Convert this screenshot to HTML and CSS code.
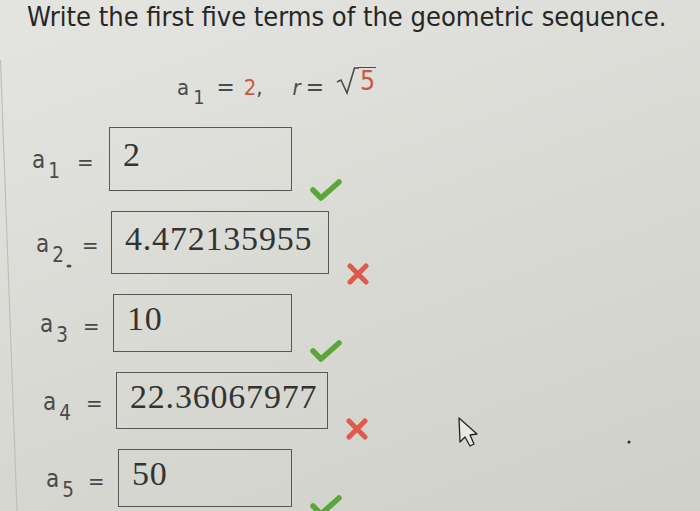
FILE: index.html
```html
<!DOCTYPE html>
<html>
<head>
<meta charset="utf-8">
<link rel="stylesheet" href="styles.css">
</head>
<body>
<div class="page">
  <h1 class="title">Write the first five terms of the geometric sequence.</h1>
  <div class="given">
    <span class="gv">a<sub>1</sub></span>
    <span class="geq">=</span>
    <span class="gval">2</span><span class="comma">,</span>
    <span class="gr">r</span>
    <span class="geq2">=</span>
    <span class="sqrt"><svg class="rad" width="23" height="28" viewBox="0 0 23 28"><path d="M1 15 L5 13 L11 26 L18.5 1 L23 1" fill="none" stroke="#4a4a4a" stroke-width="1.6"/></svg><span class="radicand">5</span></span>
  </div>
  <div class="rows">
    <div class="row r1">
      <span class="lbl">a<sub>1</sub></span><span class="eq">=</span>
      <div class="box"><span class="ans">2</span>
        <svg class="mark check" width="32" height="22" viewBox="0 0 32 22"><path d="M3 11 L11 19 L29 3" fill="none" stroke="#5ca53a" stroke-width="5.5" stroke-linecap="round" stroke-linejoin="round"/></svg>
      </div>
    </div>
    <div class="row r2">
      <span class="lbl">a<sub>2</sub></span><span class="eq">=</span>
      <div class="box"><span class="ans">4.472135955</span>
        <svg class="mark cross" width="22" height="22" viewBox="0 0 22 22"><path d="M3 3 L19 19 M19 3 L3 19" fill="none" stroke="#e05a4c" stroke-width="5" stroke-linecap="round"/></svg>
      </div>
    </div>
    <div class="row r3">
      <span class="lbl">a<sub>3</sub></span><span class="eq">=</span>
      <div class="box"><span class="ans">10</span>
        <svg class="mark check" width="32" height="22" viewBox="0 0 32 22"><path d="M3 11 L11 19 L29 3" fill="none" stroke="#5ca53a" stroke-width="5.5" stroke-linecap="round" stroke-linejoin="round"/></svg>
      </div>
    </div>
    <div class="row r4">
      <span class="lbl">a<sub>4</sub></span><span class="eq">=</span>
      <div class="box"><span class="ans">22.36067977</span>
        <svg class="mark cross" width="22" height="22" viewBox="0 0 22 22"><path d="M3 3 L19 19 M19 3 L3 19" fill="none" stroke="#e05a4c" stroke-width="5" stroke-linecap="round"/></svg>
      </div>
    </div>
    <div class="row r5">
      <span class="lbl">a<sub>5</sub></span><span class="eq">=</span>
      <div class="box"><span class="ans">50</span>
        <svg class="mark check" width="32" height="22" viewBox="0 0 32 22"><path d="M3 11 L11 19 L29 3" fill="none" stroke="#5ca53a" stroke-width="5.5" stroke-linecap="round" stroke-linejoin="round"/></svg>
      </div>
    </div>
  </div>
  <svg class="overlay" width="700" height="511" viewBox="0 0 700 511">
    <line x1="0.5" y1="60" x2="17" y2="511" stroke="#bcbdb6" stroke-width="1.1"/>
    <ellipse cx="69" cy="266" rx="2.5" ry="1.6" fill="#4a4a3a"/>
    <circle cx="629" cy="442" r="1.5" fill="#2a2a2a"/>
    <path d="M459 418 L460 442 L465 437 L470 446 L474 444 L470 435 L477 434 Z" fill="#e8e8e4" stroke="#222" stroke-width="1.3" stroke-linejoin="round"/>
  </svg>
</div>
</body>
</html>
```
FILE: styles.css
```css
html, body {
  margin: 0;
  padding: 0;
}
body {
  width: 700px;
  height: 511px;
  overflow: hidden;
  background: linear-gradient(160deg, #e4e4e1 0%, #dadad5 50%, #cfd0c8 100%);
  font-family: "DejaVu Sans Condensed", "DejaVu Sans", sans-serif;
  color: #2b2b2b;
}
.page {
  position: relative;
  width: 700px;
  height: 511px;
}
.title {
  margin: 0;
  padding: 1px 0 0 27px;
  font-size: 27px;
  font-weight: normal;
  line-height: 31px;
  color: #262626;
  white-space: nowrap;
}
.given {
  display: flex;
  align-items: baseline;
  padding: 35px 0 0 177px;
  font-size: 22px;
  line-height: 24px;
  color: #4a4a4a;
}
.gv sub {
  font-size: 0.9em;
  vertical-align: -0.45em;
  line-height: 0;
  margin-left: 4px;
}
.lbl sub {
  font-size: 0.85em;
  vertical-align: -0.5em;
  line-height: 0;
  margin-left: 3px;
}
.geq { margin-left: 12px; font-size: 1.1em; }
.gval { margin-left: 9px; color: #c9593d; }
.comma { color: #4a4a4a; }
.gr { margin-left: 30px; font-style: italic; }
.geq2 { margin-left: 5px; font-size: 1.1em; }
.sqrt {
  display: inline-flex;
  align-items: flex-end;
  margin-left: 12px;
}
.rad {
  display: block;
  margin-bottom: -2px;
}
.radicand {
  color: #c9593d;
  border-top: 1.6px solid #4a4a4a;
  padding: 0 1px 0 2px;
  margin-left: -1px;
  font-size: 1.2em;
  line-height: 25px;
}
.rows {
  display: flex;
  flex-direction: column;
  gap: 20px;
  margin-top: 27px;
}
.row {
  display: flex;
  align-items: center;
}
.lbl {
  font-size: 24px;
  color: #4a4a4a;
  position: relative;
  top: 1px;
}
.eq {
  font-size: 22px;
  color: #4a4a4a;
  position: relative;
  top: 3px;
}
.box {
  position: relative;
  box-sizing: border-box;
  border: 1.5px solid #575757;
  display: flex;
  align-items: center;
  padding: 0 0 8px 13px;
  font-family: "Liberation Serif", "DejaVu Serif", serif;
  font-size: 34px;
  letter-spacing: 0.8px;
  color: #333;
}
.mark {
  position: absolute;
  display: block;
}
.check { right: -51px; bottom: -11px; }
.cross { right: -41px; bottom: -12px; }
.r1 { padding-left: 32px; }
.r1 .lbl { width: 45px; }
.r1 .eq { width: 32px; }
.r1 .box { width: 183px; height: 64px; }
.r2 { padding-left: 36px; }
.r2 .lbl { width: 46px; }
.r2 .eq { width: 29px; }
.r2 .box { width: 218px; height: 63px; }
.r3 { padding-left: 40px; }
.r3 .lbl { width: 43px; }
.r3 .eq { width: 30px; }
.r3 .box { width: 179px; height: 58px; }
.r4 { padding-left: 43px; }
.r4 .lbl { width: 43px; }
.r4 .eq { width: 30px; }
.r4 .box { width: 212px; height: 57px; }
.r5 { padding-left: 46px; }
.r5 .lbl { width: 42px; }
.r5 .eq { width: 30px; }
.r5 .box { width: 174px; height: 58px; }
.overlay {
  position: absolute;
  left: 0;
  top: 0;
  pointer-events: none;
}
```
